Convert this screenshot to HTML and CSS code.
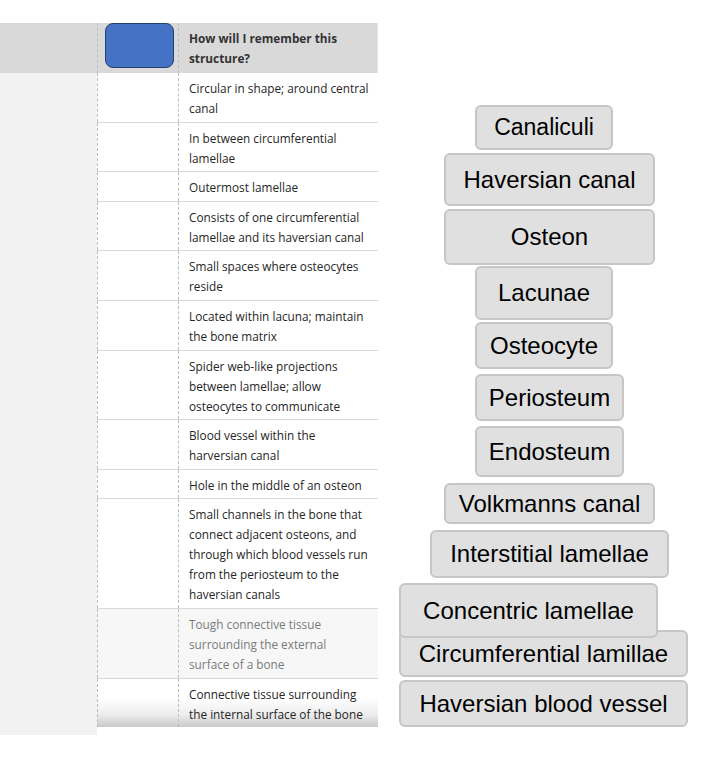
FILE: index.html
```html
<!DOCTYPE html>
<html lang="en">
<head>
<meta charset="utf-8">
<title>Bone structure matching</title>
<link rel="stylesheet" href="styles.css">
</head>
<body>
<div class="page">
  <section class="sheet">
    <div class="head-row">
      <div class="side-head"></div>
      <div class="c1"><div class="blue-btn"></div></div>
      <div class="c2 head-text">How will I remember this<br>structure?</div>
    </div>
    <div class="body">
      <div class="side"></div>
      <div class="rows">
        <div class="row"><div class="c1"></div><div class="c2">Circular in shape; around central<br>canal</div></div>
        <div class="row"><div class="c1"></div><div class="c2">In between circumferential<br>lamellae</div></div>
        <div class="row"><div class="c1"></div><div class="c2">Outermost lamellae</div></div>
        <div class="row"><div class="c1"></div><div class="c2">Consists of one circumferential<br>lamellae and its haversian canal</div></div>
        <div class="row"><div class="c1"></div><div class="c2">Small spaces where osteocytes<br>reside</div></div>
        <div class="row"><div class="c1"></div><div class="c2">Located within lacuna; maintain<br>the bone matrix</div></div>
        <div class="row"><div class="c1"></div><div class="c2">Spider web-like projections<br>between lamellae; allow<br>osteocytes to communicate</div></div>
        <div class="row"><div class="c1"></div><div class="c2">Blood vessel within the<br>harversian canal</div></div>
        <div class="row"><div class="c1"></div><div class="c2">Hole in the middle of an osteon</div></div>
        <div class="row"><div class="c1"></div><div class="c2">Small channels in the bone that<br>connect adjacent osteons, and<br>through which blood vessels run<br>from the periosteum to the<br>haversian canals</div></div>
        <div class="row row-muted"><div class="c1"></div><div class="c2">Tough connective tissue<br>surrounding the external<br>surface of a bone</div></div>
        <div class="row row-fade"><div class="c1"></div><div class="c2">Connective tissue surrounding<br>the internal surface of the bone</div></div>
      </div>
    </div>
  </section>
  <section class="canvas">
    <div class="tile t1 small">Canaliculi</div>
    <div class="tile t2">Haversian canal</div>
    <div class="tile t3">Osteon</div>
    <div class="tile t4">Lacunae</div>
    <div class="tile t5">Osteocyte</div>
    <div class="tile t6">Periosteum</div>
    <div class="tile t7">Endosteum</div>
    <div class="tile t8">Volkmanns canal</div>
    <div class="tile t9">Interstitial lamellae</div>
    <div class="tile t10">Concentric lamellae</div>
    <div class="tile t11">Circumferential lamillae</div>
    <div class="tile t12">Haversian blood vessel</div>
  </section>
</div>
</body>
</html>
```

FILE: styles.css
```css
* { box-sizing: border-box; }

html, body {
  margin: 0;
  padding: 0;
  background: #ffffff;
}

.page {
  display: flex;
  align-items: flex-start;
  width: 717px;
  height: 758px;
}

/* ---------- left worksheet ---------- */
.sheet {
  width: 378px;
  margin-top: 23px;
  font-family: "Open Sans", "Noto Sans", sans-serif;
  font-size: 11.8px;
  line-height: 20px;
  color: #262626;
}

.head-row {
  display: flex;
  height: 50px;
  background: #d9d9d9;
  border-right: 1px solid #e6e6e6;
}

.side-head {
  width: 97px;
}

.c1 {
  width: 82px;
  flex: none;
  border-left: 1px dashed #bdbdbd;
  border-right: 1px dashed #bdbdbd;
}

.head-row .c1 {
  padding-left: 7px;
}

.blue-btn {
  width: 69px;
  height: 45px;
  background: #4472c4;
  border: 1px solid #23406f;
  border-radius: 8px;
}

.c2 {
  flex: 1;
  padding: 5px 10px 3.6px 10px;
  white-space: nowrap;
}

.head-text {
  padding: 5px 10px;
  font-weight: 700;
  color: #333333;
}

.body {
  display: flex;
}

.side {
  width: 97px;
  flex: none;
  background: #f2f2f2;
}

.rows {
  width: 281px;
  margin-bottom: 8px;
}

.row {
  display: flex;
  border-bottom: 1px solid #d9d9d9;
}

.row-muted {
  background: #f7f7f7;
  color: #7a7a7a;
}

.row-fade {
  border-bottom: none;
  background: linear-gradient(to bottom, #ffffff 0%, #ffffff 40%, #ececec 75%, #c9c9c9 100%);
}

/* ---------- right drag canvas ---------- */
.canvas {
  position: relative;
  flex: 1;
  height: 758px;
}

.tile {
  position: absolute;
  display: flex;
  align-items: center;
  justify-content: center;
  background: #e0e0e0;
  border: 2px solid #c6c6c6;
  border-radius: 6px;
  font-family: "Liberation Sans", Arial, sans-serif;
  font-size: 24px;
  color: #000000;
  white-space: nowrap;
}

.tile.small { font-size: 23px; }

.t1  { left: 97px;  top: 105px; width: 138px; height: 45px; }
.t2  { left: 66px;  top: 153px; width: 211px; height: 53px; }
.t3  { left: 66px;  top: 209px; width: 211px; height: 56px; }
.t4  { left: 97px;  top: 266px; width: 138px; height: 54px; }
.t5  { left: 97px;  top: 322px; width: 138px; height: 47px; }
.t6  { left: 97px;  top: 374px; width: 149px; height: 47px; }
.t7  { left: 97px;  top: 426px; width: 149px; height: 51px; }
.t8  { left: 66px;  top: 483px; width: 211px; height: 41px; }
.t9  { left: 52px;  top: 530px; width: 239px; height: 48px; }
.t10 { left: 21px;  top: 583px; width: 259px; height: 55px; z-index: 2; }
.t11 { left: 21px;  top: 630px; width: 289px; height: 47px; }
.t12 { left: 21px;  top: 680px; width: 289px; height: 47px; }
```
